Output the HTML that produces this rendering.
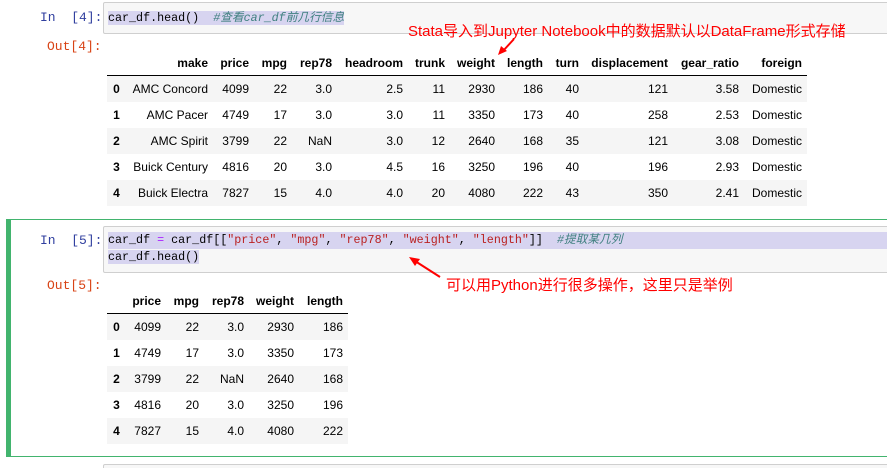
<!DOCTYPE html>
<html style="width:887px;height:468px;overflow:hidden;"><head><meta charset="utf-8"><style>
body{margin:0;width:887px;height:468px;background:#fff;position:relative;overflow:hidden;font-family:"Liberation Sans","Noto Sans CJK SC",sans-serif;}
.abs{position:absolute;}
.prompt{font-family:"Liberation Mono","Noto Sans CJK SC",monospace;font-size:13px;}
.in{color:#303f9f;}
.out{color:#d84315;}
.box{position:absolute;left:103px;width:790px;background:#f7f7f7;border:1px solid #cfcfcf;border-radius:2px;}
.code{position:absolute;left:4px;font-family:"Liberation Mono","Noto Sans CJK SC",monospace;font-size:11.7px;line-height:17px;white-space:pre;color:#000;}
.sel{background:#d7d4f0;}
.cm{color:#408080;font-style:italic;}
.st{color:#ba2121;}
.op{color:#aa22ff;}
table{position:absolute;border-collapse:collapse;font-size:12px;color:#000;table-layout:fixed;}
td,th{padding:0 5px 0 0;text-align:right;height:26px;white-space:nowrap;}
th{font-weight:bold;}
thead th{height:24px;border-bottom:1px solid #000;vertical-align:middle;}
tbody tr:nth-child(odd){background:#f5f5f5;}
tbody th{text-align:center;padding:0;}
.note{position:absolute;color:#ff0000;font-size:15px;white-space:nowrap;}
</style></head><body>
<div class="abs prompt in" style="left:40px;top:10px;">In&nbsp;&nbsp;[4]:</div>
<div class="box" style="top:2px;height:30px;">
<div class="code" style="top:7px;"><span class="sel">car_df.head()  <span class="cm">#查看car_df前几行信息</span></span></div>
</div>
<div class="abs prompt out" style="left:47px;top:39px;">Out[4]:</div>
<div class="note" style="left:408px;top:20px;">Stata导入到Jupyter Notebook中的数据默认以DataFrame形式存储</div>
<svg class="abs" style="left:495px;top:36px" width="30" height="22"><line x1="19" y1="3" x2="8" y2="15" stroke="#f00" stroke-width="2"/><polygon points="3,19 6,10 12,15" fill="#f00"/></svg>
<table style="left:107px;top:51px;width:700px;">
<colgroup><col style="width:19px"><col style="width:87px"><col style="width:41px"><col style="width:38px"><col style="width:45px"><col style="width:71px"><col style="width:42px"><col style="width:50px"><col style="width:48px"><col style="width:36px"><col style="width:89px"><col style="width:71px"><col style="width:63px"></colgroup>
<thead><tr><th></th><th>make</th><th>price</th><th>mpg</th><th>rep78</th><th>headroom</th><th>trunk</th><th>weight</th><th>length</th><th>turn</th><th>displacement</th><th>gear_ratio</th><th>foreign</th></tr></thead>
<tbody>
<tr><th>0</th><td>AMC Concord</td><td>4099</td><td>22</td><td>3.0</td><td>2.5</td><td>11</td><td>2930</td><td>186</td><td>40</td><td>121</td><td>3.58</td><td>Domestic</td></tr>
<tr><th>1</th><td>AMC Pacer</td><td>4749</td><td>17</td><td>3.0</td><td>3.0</td><td>11</td><td>3350</td><td>173</td><td>40</td><td>258</td><td>2.53</td><td>Domestic</td></tr>
<tr><th>2</th><td>AMC Spirit</td><td>3799</td><td>22</td><td>NaN</td><td>3.0</td><td>12</td><td>2640</td><td>168</td><td>35</td><td>121</td><td>3.08</td><td>Domestic</td></tr>
<tr><th>3</th><td>Buick Century</td><td>4816</td><td>20</td><td>3.0</td><td>4.5</td><td>16</td><td>3250</td><td>196</td><td>40</td><td>196</td><td>2.93</td><td>Domestic</td></tr>
<tr><th>4</th><td>Buick Electra</td><td>7827</td><td>15</td><td>4.0</td><td>4.0</td><td>20</td><td>4080</td><td>222</td><td>43</td><td>350</td><td>2.41</td><td>Domestic</td></tr>
</tbody></table>

<div class="abs" style="left:6px;top:219px;width:900px;height:236px;border-top:1px solid #42b46e;border-bottom:1px solid #42b46e;"></div>
<div class="abs" style="left:6px;top:219px;width:5px;height:238px;background:#42b46e;"></div>
<div class="abs prompt in" style="left:40px;top:233px;">In&nbsp;&nbsp;[5]:</div>
<div class="box" style="top:226px;height:45px;">
<div class="code" style="top:5px;width:790px;"><div class="sel">car_df <span class="op">=</span> car_df[[<span class="st">"price"</span>, <span class="st">"mpg"</span>, <span class="st">"rep78"</span>, <span class="st">"weight"</span>, <span class="st">"length"</span>]]  <span class="cm">#提取某几列</span></div><span class="sel">car_df.head()</span></div>
</div>
<div class="abs prompt out" style="left:47px;top:278px;">Out[5]:</div>
<div class="note" style="left:446px;top:274px;">可以用Python进行很多操作，这里只是举例</div>
<svg class="abs" style="left:405px;top:252px" width="40" height="30"><line x1="35" y1="25" x2="10" y2="9" stroke="#f00" stroke-width="2"/><polygon points="4,5 15,7 10,14" fill="#f00"/></svg>
<table style="left:107px;top:289px;width:241px;">
<colgroup><col style="width:19px"><col style="width:40px"><col style="width:38px"><col style="width:45px"><col style="width:50px"><col style="width:49px"></colgroup>
<thead><tr><th></th><th>price</th><th>mpg</th><th>rep78</th><th>weight</th><th>length</th></tr></thead>
<tbody>
<tr><th>0</th><td>4099</td><td>22</td><td>3.0</td><td>2930</td><td>186</td></tr>
<tr><th>1</th><td>4749</td><td>17</td><td>3.0</td><td>3350</td><td>173</td></tr>
<tr><th>2</th><td>3799</td><td>22</td><td>NaN</td><td>2640</td><td>168</td></tr>
<tr><th>3</th><td>4816</td><td>20</td><td>3.0</td><td>3250</td><td>196</td></tr>
<tr><th>4</th><td>7827</td><td>15</td><td>4.0</td><td>4080</td><td>222</td></tr>
</tbody></table>
<div class="box" style="top:464px;height:10px;"></div>
</body></html>
